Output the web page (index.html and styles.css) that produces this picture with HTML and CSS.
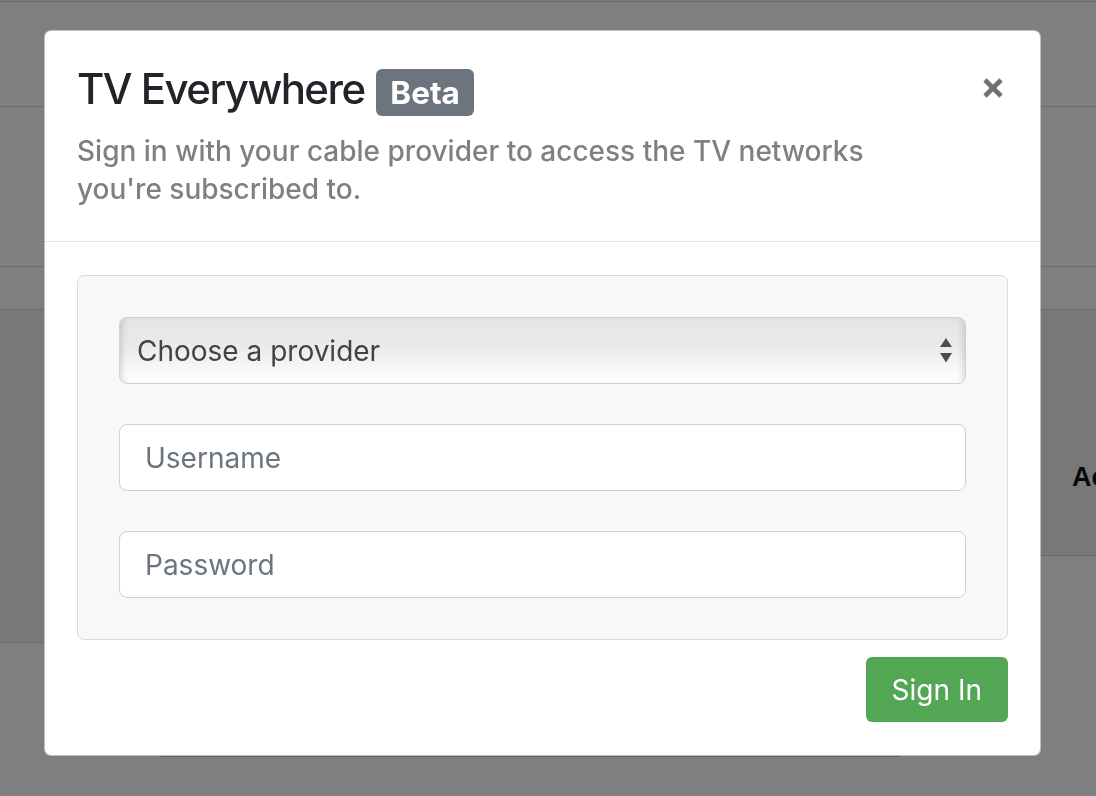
FILE: index.html
```html
<!DOCTYPE html>
<html lang="en">
<head>
<meta charset="utf-8">
<title>TV Everywhere</title>
<link rel="stylesheet" href="styles.css">
</head>
<body>
<div class="page">
  <div class="page-row row-a"></div>
  <div class="page-row row-b"></div>
  <div class="page-row row-c"></div>
  <div class="row-d">
    <div class="row-d-main"></div>
    <div class="row-d-side"><span class="side-label">Ac</span></div>
  </div>
  <div class="row-e"></div>
  <div class="row-e-line"></div>
</div>

<div class="modal-layer">
  <div class="modal">
    <div class="modal-header">
      <div class="header-text">
        <h2 class="modal-title">TV Everywhere <span class="badge">Beta</span></h2>
        <p class="modal-sub">Sign in with your cable provider to access the TV networks<br>you're subscribed to.</p>
      </div>
      <button class="close" type="button" aria-label="Close">
        <svg width="22" height="22" viewBox="0 0 22 22" aria-hidden="true">
          <path d="M3 3 L19 19 M19 3 L3 19" stroke="currentColor" stroke-width="4.6" stroke-linecap="butt" fill="none"/>
        </svg>
      </button>
    </div>
    <div class="modal-body">
      <div class="card">
        <div class="field select-field">
          <span class="select-text">Choose a provider</span>
          <svg class="select-arrows" width="12" height="25" viewBox="0 0 12 25" aria-hidden="true">
            <path d="M6 0 L12 9 L0 9 Z M0 15 L12 15 L6 24.5 Z" fill="#4a4f55"/>
          </svg>
        </div>
        <div class="field input-field"><span class="placeholder">Username</span></div>
        <div class="field input-field"><span class="placeholder">Password</span></div>
      </div>
    </div>
    <div class="modal-footer">
      <button class="btn-signin" type="button">Sign In</button>
    </div>
  </div>
</div>
</body>
</html>
```

FILE: styles.css
```css
* { box-sizing: border-box; }

html, body {
  margin: 0;
  padding: 0;
}

body {
  width: 1096px;
  height: 796px;
  overflow: hidden;
  background: #ffffff;
  font-family: Inter, "Noto Sans", "Liberation Sans", sans-serif;
}

/* ---------- page behind the backdrop ---------- */
.page {
  padding-top: 1px;
}

.page-row {
  border-bottom: 1px solid #d6d6d6;
}

.row-a {
  border-top: 1px solid #d2d2d2;
  height: 106px;
}

.row-b { height: 160px; }
.row-c { height: 43px; }

.row-d {
  display: flex;
  height: 333px;
}

.row-d-main {
  flex: 1;
  background: #f1f1f1;
  border-bottom: 1px solid #d6d6d6;
}

.row-d-side {
  width: 60px;
  display: flex;
  align-items: center;
  background: linear-gradient(#f1f1f1 0 245px, #d6d6d6 245px 246px, #ffffff 246px);
}

.side-label {
  font-family: "Liberation Sans", Arial, sans-serif;
  font-weight: 700;
  font-size: 27px;
  color: #111;
  padding-left: 36px;
  padding-top: 2px;
  white-space: nowrap;
}

.row-e { height: 112px; }

.row-e-line {
  margin-left: 160px;
  width: 740px;
  height: 2px;
  background: #bdbdbd;
}

/* ---------- modal ---------- */
.modal-layer {
  position: fixed;
  inset: 0;
  background: rgba(0, 0, 0, 0.5);
  padding: 30px 0 0 44px;
}

.modal {
  width: 997px;
  background: #fff;
  border: 1px solid rgba(0, 0, 0, 0.25);
  border-radius: 7px;
}

.modal-header {
  display: flex;
  justify-content: space-between;
  align-items: flex-start;
  padding: 33px 36px 33px 32px;
  border-bottom: 1px solid #dee2e6;
}

.modal-title {
  margin: 0;
  font-size: 42px;
  font-weight: 500;
  line-height: 1.2;
  color: #212529;
  letter-spacing: -1.55px;
}

.badge {
  display: inline-block;
  font-size: 75%;
  font-weight: 700;
  line-height: 1;
  padding: 0.25em 0.45em;
  border-radius: 6px;
  background: #6c757d;
  color: #fff;
  vertical-align: baseline;
  letter-spacing: 0;
  margin-left: 2px;
}

.modal-sub {
  margin: 17px 0 0;
  font-size: 28px;
  line-height: 37.5px;
  font-weight: 500;
  color: #808080;
}

.close {
  margin-top: 13px;
  padding: 0;
  border: 0;
  background: transparent;
  color: #707070;
  width: 22px;
  height: 22px;
  display: flex;
}

.modal-body {
  padding: 33px 32px 17px;
}

.card {
  background: #f7f8fa;
  border: 1px solid #d8dbdf;
  border-radius: 7px;
  padding: 41px;
  display: flex;
  flex-direction: column;
  gap: 40px;
}

.field {
  height: 67px;
  border: 1px solid #ccd1d6;
  border-radius: 8px;
  display: flex;
  align-items: center;
  font-size: 28px;
}

.select-field {
  justify-content: space-between;
  padding: 0 13px 0 17px;
  background: linear-gradient(#e4e4e4 0%, #ebebeb 45%, #fcfcfc 90%, #ffffff 100%);
  box-shadow: inset 7px 0 6px -5px rgba(0, 0, 0, 0.14), inset -7px 0 6px -5px rgba(0, 0, 0, 0.14);
  color: #3e444a;
}

.select-arrows {
  display: block;
}

.input-field {
  background: #fff;
  padding: 0 25px;
}

.placeholder {
  color: #6c757d;
}

.modal-footer {
  display: flex;
  justify-content: flex-end;
  padding: 0 32px 33px;
}

.btn-signin {
  height: 65px;
  padding: 0 26px;
  border: 0;
  border-radius: 6px;
  background: #53a653;
  color: #fff;
  font-family: Inter, "Noto Sans", sans-serif;
  font-size: 28px;
  font-weight: 400;
}
```
